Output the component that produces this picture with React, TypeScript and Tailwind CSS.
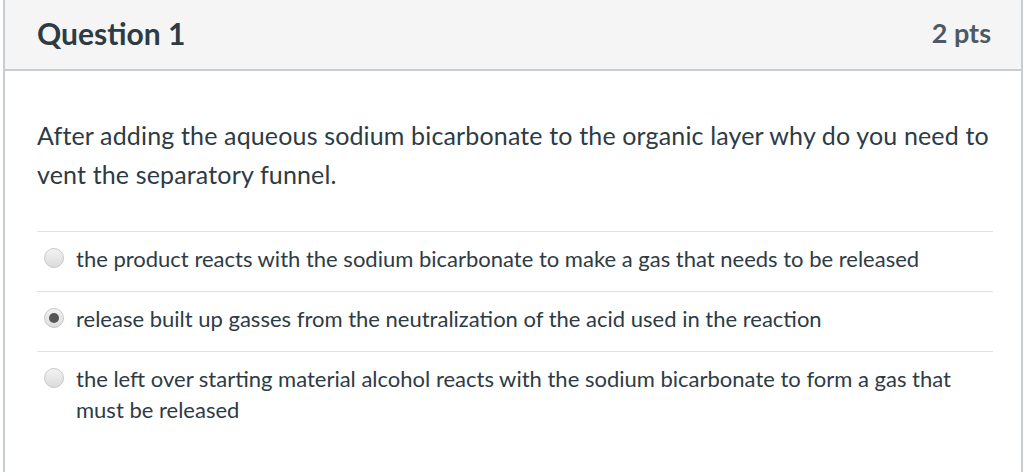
import React from 'react';

const answers = [
  {
    text: 'the product reacts with the sodium bicarbonate to make a gas that needs to be released',
    checked: false,
  },
  {
    text: 'release built up gasses from the neutralization of the acid used in the reaction',
    checked: true,
  },
  {
    text: 'the left over starting material alcohol reacts with the sodium bicarbonate to form a gas that must be released',
    checked: false,
  },
];

function Radio({ checked }: { checked: boolean }) {
  return (
    <span className="mt-[5px] flex h-[20px] w-[20px] shrink-0 items-center justify-center rounded-full border border-[#c8c8c8] bg-gradient-to-b from-[#f2f2f2] to-[#dcdcdc]">
      {checked && <span className="h-[10px] w-[10px] rounded-full bg-[#555]" />}
    </span>
  );
}

export default function App() {
  return (
    <div className="h-[472px] w-[1024px] overflow-hidden bg-white pl-[3px] pr-[1px] font-['Lato',sans-serif] text-[#2d3b45]">
      <div className="h-full border-x-2 border-[#c7cdd1]">
        {/* Header */}
        <div className="flex h-[71px] items-center justify-between border-b-2 border-[#c7cdd1] bg-[#f5f5f5] pb-[3px] pl-[32px] pr-[30px]">
          <h2 className="text-[30px] font-bold text-[#2d3b45]">Question 1</h2>
          <span className="text-[27px] font-bold text-[#4d5a63]">2 pts</span>
        </div>

        {/* Body */}
        <div className="pl-[32px] pr-[28px] pt-[45px]">
          <p className="text-[25px] leading-[39px] tracking-[0.15px] text-[#2d3b45]">
            After adding the aqueous sodium bicarbonate to the organic layer why do you need to vent the separatory funnel.
          </p>

          <div className="mt-[37px]">
            {answers.map((a, i) => (
              <div key={i} className="flex gap-[12px] border-t border-[#dfe3e6] pb-[17px] pl-[7px] pt-[11px]">
                <Radio checked={a.checked} />
                <span className="text-[22px] leading-[31px] text-[#2d3b45]">{a.text}</span>
              </div>
            ))}
          </div>
        </div>
      </div>
    </div>
  );
}
